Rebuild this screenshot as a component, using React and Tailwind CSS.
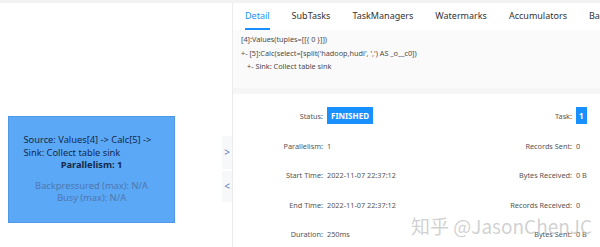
import React from 'react';

const tabs = ['Detail', 'SubTasks', 'TaskManagers', 'Watermarks', 'Accumulators', 'BackPressure'];

const badge = 'bg-[#1890ff] text-white font-bold py-[3px] text-[8px] leading-[9px]';

const rows = [
  { l: 'Status', v: <span className={`${badge} px-[4px]`}>FINISHED</span>, rl: 'Task', rv: <span className={`${badge} px-[3px]`}>1</span> },
  { l: 'Parallelism', v: '1', rl: 'Records Sent', rv: '0' },
  { l: 'Start Time', v: '2022-11-07 22:37:12', rl: 'Bytes Received', rv: '0 B' },
  { l: 'End Time', v: '2022-11-07 22:37:12', rl: 'Records Received', rv: '0' },
  { l: 'Duration', v: '250ms', rl: 'Bytes Sent', rv: '0 B' },
];

export default function App() {
  return (
    <div className="w-[600px] h-[247px] bg-white flex overflow-hidden border-t-[3px] border-[#f2f2f2]" style={{ fontFamily: '"Noto Sans", "Liberation Sans", sans-serif' }}>
      {/* graph canvas */}
      <div className="relative w-[232px] shrink-0 h-full">
        <div className="absolute left-[8px] top-[113px] w-[167px] h-[107px] bg-[#5ba8f6] border border-[#4e98e6] flex flex-col items-center pt-[17px] text-[9.3px] leading-[12.5px] text-[#13284a] whitespace-nowrap">
          <div className="w-[136px]">Source: Values[4] -&gt; Calc[5] -&gt;</div>
          <div className="w-[136px]">Sink: Collect table sink</div>
          <div className="font-bold">Parallelism: 1</div>
          <div className="mt-[8px] text-[#4f77ad]">Backpressured (max): N/A</div>
          <div className="text-[#4f77ad]">Busy (max): N/A</div>
        </div>
        <div className="absolute right-0 top-[133px] flex flex-col gap-[2px]">
          <div className="w-[10px] h-[33px] bg-[#f7f8fa] flex items-center justify-center text-[#5a7ec0] text-[10px]">&gt;</div>
          <div className="w-[10px] h-[31px] bg-[#f7f8fa] flex items-center justify-center text-[#5a7ec0] text-[10px]">&lt;</div>
        </div>
      </div>

      {/* detail panel */}
      <div className="flex-1 min-w-0 border-l border-[#ebebeb] flex flex-col relative overflow-hidden">
        <div className="flex h-[27px] pl-[12px] gap-[22px] text-[9px] text-[#333] whitespace-nowrap shrink-0">
          {tabs.map((t, i) => (
            <div key={t} className={`pt-[6px] ${i === 0 ? 'text-[#1890ff] border-b-2 border-[#1890ff]' : ''}`}>{t}</div>
          ))}
        </div>
        <div className="bg-[#fafafa] h-[58px] shrink-0 pl-[8px] pt-[3px] text-[7.3px] leading-[13.5px] text-[#4a4a4a] whitespace-nowrap">
          <div>{'[4]:Values(tuples=[[{ 0 }]])'}</div>
          <div>{"+- [5]:Calc(select=[split('hadoop,hudi', ',') AS _o__c0])"}</div>
          <div className="pl-[6px]">+- Sink: Collect table sink</div>
        </div>
        <div className="h-[6px] bg-[#f6f6f6] shrink-0" />
        <div className="flex-1 pt-[8px] text-[7.3px] text-[#555] whitespace-nowrap">
          {rows.map((r) => (
            <div key={r.l} className="flex h-[29.5px] items-center">
              <div className="w-[90px] text-right">{r.l}:</div>
              <div className="ml-[4px] flex-1">{r.v}</div>
              <div className="w-[150px] text-right">{r.rl}:</div>
              <div className="ml-[4px] w-[24px]">{r.rv}</div>
            </div>
          ))}
        </div>
        <div className="absolute left-[178px] top-[209px] text-[19px] text-[#bdbdbd]/70 whitespace-nowrap" style={{ fontFamily: '"Noto Sans CJK SC", sans-serif' }}>知乎 @JasonChenJC</div>
      </div>
    </div>
  );
}
